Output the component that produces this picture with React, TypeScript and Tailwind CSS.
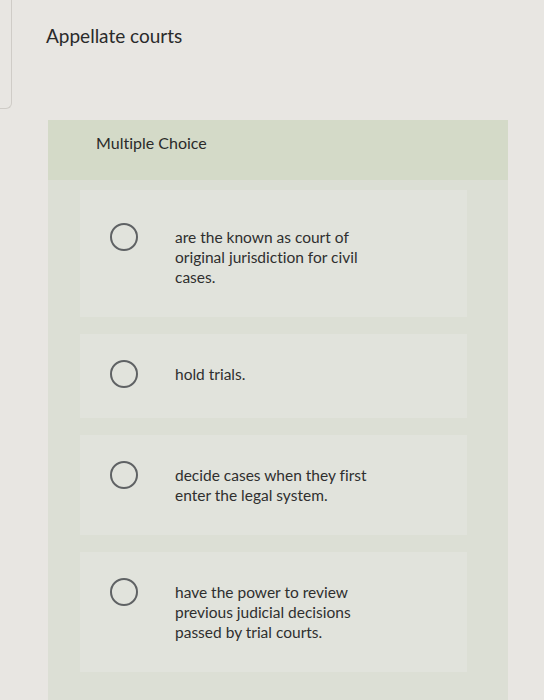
import React from "react";

const options = [
  ["are the known as court of", "original jurisdiction for civil", "cases."],
  ["hold trials."],
  ["decide cases when they first", "enter the legal system."],
  ["have the power to review", "previous judicial decisions", "passed by trial courts."],
];

export default function App() {
  return (
    <div
      className="relative h-[700px] w-[544px] overflow-hidden bg-[#e8e6e2] [font-variant-ligatures:none]"
      style={{ fontFamily: "Lato, 'Open Sans', sans-serif" }}
    >
      <div className="absolute left-[-10px] top-[-10px] h-[119px] w-[22px] rounded-br-[6px] border-b border-r border-[#cfccc7]" />
      <div className="pl-[46px] pt-[24px] text-[19px] leading-[24px] text-[#2a2a2a]">Appellate courts</div>
      <div className="ml-[48px] mt-[72px] h-[600px] w-[460px] bg-[#dcdfd5]">
        <div className="h-[60px] bg-[#d4dac8] pl-[48px] pt-[13px] text-[16px] leading-[20px] text-[#2a2a2a]">
          Multiple Choice
        </div>
        <div className="ml-[32px] mt-[10px] flex w-[387px] flex-col gap-[17px]">
          {options.map((lines, i) => (
            <div key={i} className="flex items-start bg-[#e1e3dc] pb-[30px] pl-[30px] pt-[30px] first:pt-[37px]">
              <div className="mt-[-4px] h-[28px] w-[28px] shrink-0 rounded-full border-2 border-[#5f6264]" />
              <div className="ml-[37px] text-[15.5px] leading-[20px] text-[#2f2f2f]">
                {lines.map((l, j) => (
                  <div key={j}>{l}</div>
                ))}
              </div>
            </div>
          ))}
        </div>
      </div>
    </div>
  );
}
